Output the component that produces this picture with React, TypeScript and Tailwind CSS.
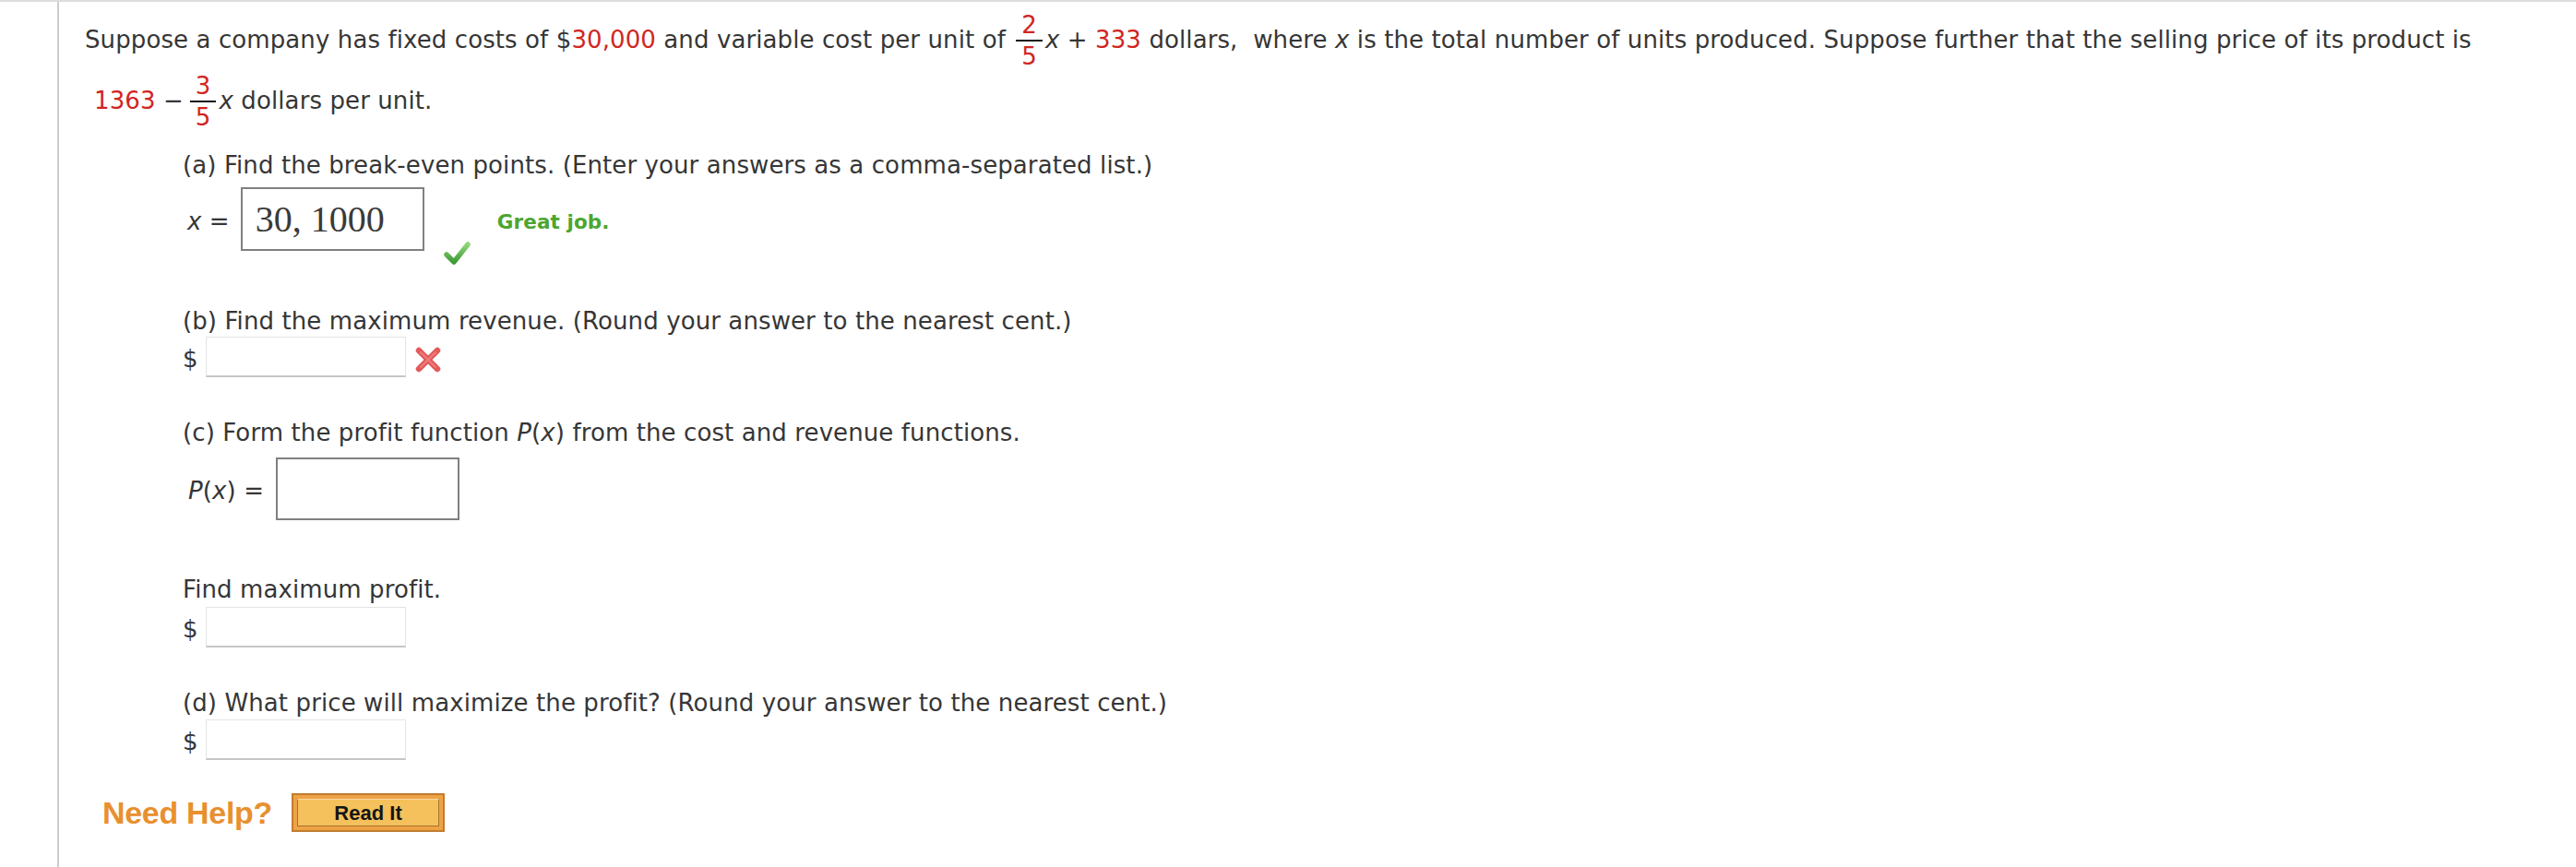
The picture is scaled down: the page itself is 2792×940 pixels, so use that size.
import React from "react";

const RED = "text-[#d0261f]";

function Frac({ n, d }: { n: string; d: string }) {
  return (
    <span className="inline-flex flex-col items-center align-middle leading-[25px] mx-[3px]">
      <span className={`${RED} px-[6px] border-b-2 border-[#111] pb-[3px]`}>{n}</span>
      <span className={`${RED} pt-[4px]`}>{d}</span>
    </span>
  );
}

function Check() {
  return (
    <svg width="30" height="28" viewBox="0 0 30 28">
      <defs>
        <linearGradient id="cg" x1="0" y1="0" x2="0" y2="1">
          <stop offset="0" stopColor="#8fd67a" />
          <stop offset="1" stopColor="#3f9b36" />
        </linearGradient>
      </defs>
      <polyline
        points="3,15 11,23 26,4"
        fill="none"
        stroke="url(#cg)"
        strokeWidth="5.5"
        strokeLinecap="round"
        strokeLinejoin="round"
      />
    </svg>
  );
}

function Cross() {
  return (
    <svg width="30" height="28" viewBox="0 0 30 28">
      <g stroke="#e25a5a" strokeWidth="6.5" strokeLinecap="round">
        <line x1="5" y1="4" x2="25" y2="24" />
        <line x1="25" y1="4" x2="5" y2="24" />
      </g>
      <g stroke="#ee7d7b" strokeWidth="2" strokeLinecap="round">
        <line x1="7" y1="6" x2="23" y2="22" />
        <line x1="23" y1="6" x2="7" y2="22" />
      </g>
    </svg>
  );
}

function Field() {
  return (
    <div className="w-[217px] h-[44px] bg-white border border-[#e3e3e3] border-b-2 border-b-[#c6c6c6]" />
  );
}

export default function App() {
  return (
    <div className="w-[2792px] min-h-[940px] bg-white border-t-2 border-[#dddddd] font-['DejaVu_Sans',sans-serif] text-[26px] tracking-[0.1px] text-[#363636]">
      <div className="flex min-h-[938px]">
        <div className="w-[62px] shrink-0" />
        <div className="w-[2px] shrink-0 bg-[#cccccc]" />
        <div className="pl-[28px] flex flex-col">
          {/* line 1 */}
          <div className="mt-[12px] h-[61px] flex items-center whitespace-nowrap">
            <span>
              Suppose a company has fixed costs of $<span className={RED}>30,000</span> and variable cost per unit of{" "}
              <Frac n="2" d="5" />
              <i>x</i> + <span className={RED}>333</span> dollars,{"\u00a0"} where <i>x</i> is the total number of units produced. Suppose further that the selling price of its product is
            </span>
          </div>
          {/* line 2 */}
          <div className="h-[70px] flex items-center whitespace-nowrap pl-[10px]">
            <span>
              <span className={RED}>1363</span> −<span className="ml-[4px]"><Frac n="3" d="5" /></span>
              <i>x</i> dollars per unit.
            </span>
          </div>

          <div className="pl-[106px] flex flex-col">
            {/* (a) */}
            <div className="mt-[19px] h-[30px] flex items-center">
              <span>(a) Find the break-even points. (Enter your answers as a comma-separated list.)</span>
            </div>
            <div className="mt-[9px] h-[69px] flex items-start">
              <span className="ml-[5px] h-[69px] flex items-center pt-[5px]">
                <span>
                  <i>x</i> =
                </span>
              </span>
              <div className="ml-[12px] w-[199px] h-[69px] border-2 border-[#808080] flex items-center pl-[14px] font-['Liberation_Serif',serif] text-[40px] tracking-normal text-[#3a3a3a]">
                30, 1000
              </div>
              <div className="ml-[21px] mt-[58px]">
                <Check />
              </div>
              <div className="ml-[28px] h-[69px] flex items-center pt-[8px]">
                <span className="font-bold text-[21.5px] text-[#4ca630]">Great job.</span>
              </div>
            </div>

            {/* (b) */}
            <div className="mt-[61px] h-[30px] flex items-center">
              <span>(b) Find the maximum revenue. (Round your answer to the nearest cent.)</span>
            </div>
            <div className="mt-[2px] h-[44px] flex items-center">
              <span className="pt-[4px]">$</span>
              <div className="ml-[8px]">
                <Field />
              </div>
              <div className="ml-[9px] pt-[6px]">
                <Cross />
              </div>
            </div>

            {/* (c) */}
            <div className="mt-[45px] h-[30px] flex items-center">
              <span>
                (c) Form the profit function <i>P</i>(<i>x</i>) from the cost and revenue functions.
              </span>
            </div>
            <div className="mt-[12px] h-[68px] flex items-center">
              <span className="ml-[6px] pt-[4px]">
                <i>P</i>(<i>x</i>) =
              </span>
              <div className="ml-[13px] w-[199px] h-[68px] border-2 border-[#808080]" />
            </div>

            <div className="mt-[60px] h-[30px] flex items-center">
              <span>Find maximum profit.</span>
            </div>
            <div className="mt-[4px] h-[44px] flex items-center">
              <span className="pt-[4px]">$</span>
              <div className="ml-[8px]">
                <Field />
              </div>
            </div>

            {/* (d) */}
            <div className="mt-[45px] h-[30px] flex items-center">
              <span>(d) What price will maximize the profit? (Round your answer to the nearest cent.)</span>
            </div>
            <div className="mt-[3px] h-[44px] flex items-center">
              <span className="pt-[4px]">$</span>
              <div className="ml-[8px]">
                <Field />
              </div>
            </div>
          </div>

          {/* Need help */}
          <div className="mt-[36px] h-[42px] flex items-center pl-[19px]">
            <span className="font-['Liberation_Sans',sans-serif] font-bold text-[34px] tracking-[-0.3px] text-[#e8902f]">
              Need Help?
            </span>
            <div className="ml-[21px] w-[166px] h-[42px] border-2 border-[#c17c30] bg-[#eea246] p-[4px]">
              <div className="w-full h-full border border-[#a8732e] border-t-[#f7d9a0] bg-[#f4c15c] flex items-center justify-center">
                <span className="font-['Liberation_Sans',sans-serif] font-bold text-[22px] tracking-normal text-[#151515]">Read It</span>
              </div>
            </div>
          </div>
        </div>
      </div>
    </div>
  );
}
